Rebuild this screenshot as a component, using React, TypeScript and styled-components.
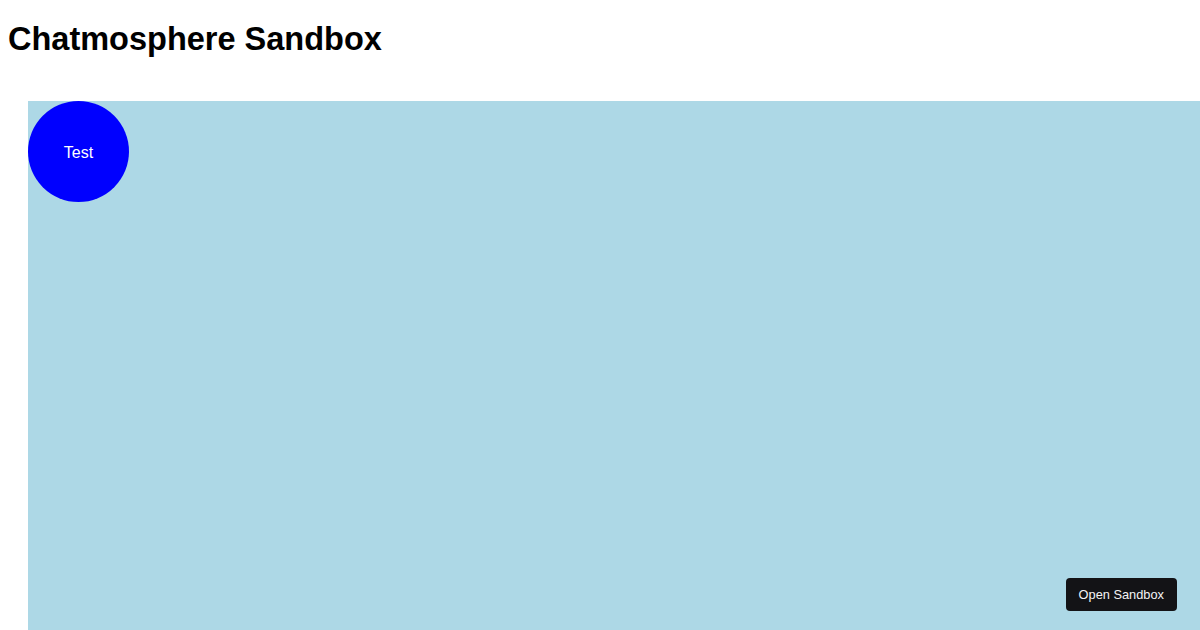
import React from 'react';
import styled, { createGlobalStyle } from 'styled-components';

const GlobalStyle = createGlobalStyle`
  body {
    margin: 0;
    font-family: 'Liberation Sans', Arial, sans-serif;
    background: #ffffff;
  }
`;

const Page = styled.div`
  padding: 0 0 0 8px;
`;

const Title = styled.h1`
  font-size: 32.5px;
  font-weight: 700;
  margin: 21.44px 0;
  color: #000000;
`;

const Stage = styled.div`
  padding: 21px 0 0 20px;
`;

const Canvas = styled.div`
  position: relative;
  width: 1172px;
  height: 529px;
  background-color: lightblue;
`;

const Node = styled.div<{ $x: number; $y: number; $size: number }>`
  position: absolute;
  left: ${(p) => p.$x}px;
  top: ${(p) => p.$y}px;
  width: ${(p) => p.$size}px;
  height: ${(p) => p.$size}px;
  box-sizing: border-box;
  padding-top: 3px;
  border-radius: 50%;
  background-color: blue;
  color: #ffffff;
  font-size: 16px;
  display: flex;
  align-items: center;
  justify-content: center;
`;

const OpenButton = styled.button`
  position: fixed;
  right: 23px;
  bottom: 19px;
  height: 33px;
  padding: 0 13px;
  border: none;
  border-radius: 4px;
  background-color: #131316;
  color: #f4f4f5;
  font-family: 'Liberation Sans', Arial, sans-serif;
  font-size: 12.8px;
  cursor: pointer;
`;

export default function App(): JSX.Element {
  return (
    <Page>
      <GlobalStyle />
      <Title>Chatmosphere Sandbox</Title>
      <Stage>
        <Canvas>
          <Node $x={0} $y={0} $size={101}>
            Test
          </Node>
        </Canvas>
      </Stage>
      <OpenButton>Open Sandbox</OpenButton>
    </Page>
  );
}
